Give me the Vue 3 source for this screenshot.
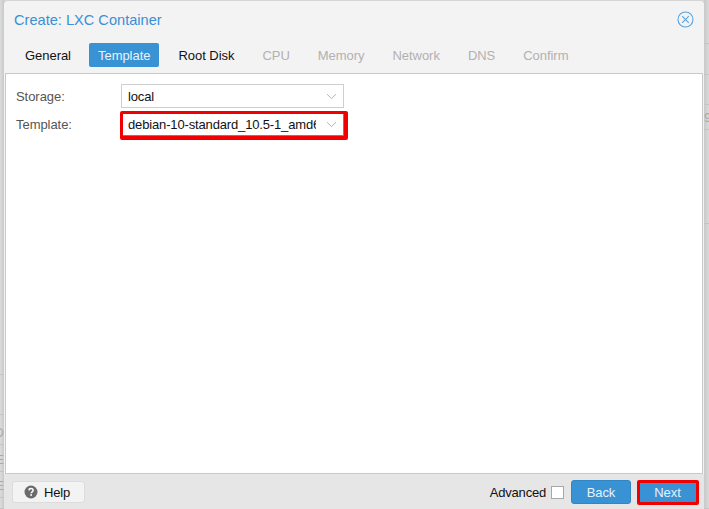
<script setup>
const tabs = [
  { label: 'General' },
  { label: 'Template', active: true },
  { label: 'Root Disk' },
  { label: 'CPU', disabled: true },
  { label: 'Memory', disabled: true },
  { label: 'Network', disabled: true },
  { label: 'DNS', disabled: true },
  { label: 'Confirm', disabled: true },
]
const leftRows = [
  { h: 375, t: '' },
  { h: 40, t: '' },
  { h: 30, t: 'D' },
  { h: 27, t: 'E' },
  { h: 26, t: 'E' },
  { h: 11, t: '' },
]
const rightRows = [
  { h: 44, t: '' },
  { h: 31, t: '' },
  { h: 30, t: '' },
  { h: 25, t: '9' },
  { h: 94, t: '' },
  { h: 285, t: '' },
]
</script>

<template>
  <div class="page">
    <aside class="strip left">
      <div
        v-for="(r, i) in leftRows"
        :key="i"
        class="bg-row"
        :style="{ height: r.h + 'px' }"
      ><span v-if="r.t">{{ r.t }}</span></div>
    </aside>

    <div class="window">
      <header class="head">
        <div class="title-row">
          <span class="title">Create: LXC Container</span>
          <svg class="close" width="17" height="17" viewBox="0 0 17 17" aria-hidden="true">
            <circle cx="8.5" cy="8.5" r="7.5" fill="none" stroke="#5ba3dc" stroke-width="1.1" />
            <path d="M5.2 5.2 11.8 11.8M11.8 5.2 5.2 11.8" stroke="#5ba3dc" stroke-width="1.1" fill="none" />
          </svg>
        </div>
        <nav class="tabs">
          <span
            v-for="t in tabs"
            :key="t.label"
            class="tab"
            :class="{ active: t.active, disabled: t.disabled }"
          >{{ t.label }}</span>
        </nav>
      </header>

      <main class="body">
        <div class="row">
          <label class="label">Storage:</label>
          <div class="select">
            <span class="value">local</span>
            <svg class="chev" width="11" height="7" viewBox="0 0 11 7"><path d="M1 1.2 5.5 5.6 10 1.2" fill="none" stroke="#b4b4b4" stroke-width="1" /></svg>
          </div>
        </div>
        <div class="row">
          <label class="label">Template:</label>
          <div class="select focused">
            <span class="value">debian-10-standard_10.5-1_amd64.tar.gz</span>
            <svg class="chev" width="11" height="7" viewBox="0 0 11 7"><path d="M1 1.2 5.5 5.6 10 1.2" fill="none" stroke="#b4b4b4" stroke-width="1" /></svg>
          </div>
        </div>
      </main>

      <footer class="foot">
        <button class="help" type="button">
          <svg width="14" height="14" viewBox="0 0 14 14" aria-hidden="true">
            <circle cx="7" cy="7" r="6.5" fill="#6b6b6b" />
            <path d="M4.9 5.4C5 4.2 5.9 3.6 7 3.6c1.2 0 2.1.7 2.1 1.8 0 1.5-1.9 1.5-1.9 2.8" fill="none" stroke="#fff" stroke-width="1.5" />
            <rect x="6.3" y="9.2" width="1.7" height="1.6" fill="#fff" />
          </svg>
          <span>Help</span>
        </button>
        <div class="spacer"></div>
        <span class="adv">Advanced</span>
        <span class="check"></span>
        <button class="primary back" type="button">Back</button>
        <button class="primary next" type="button">Next</button>
      </footer>
    </div>

    <aside class="strip right">
      <div
        v-for="(r, i) in rightRows"
        :key="i"
        class="bg-row"
        :style="{ height: r.h + 'px' }"
      ><span v-if="r.t">{{ r.t }}</span></div>
    </aside>
  </div>
</template>

<style>
html, body { margin: 0; padding: 0; overflow: hidden; }
</style>

<style scoped>
.page {
  width: 709px;
  height: 509px;
  display: flex;
  background: #d6d6d6;
  font-family: "Liberation Sans", Arial, sans-serif;
  font-size: 13px;
  overflow: hidden;
}
.strip {
  flex: none;
  height: 509px;
  overflow: hidden;
  color: #a9a9a9;
  font-size: 13px;
}
.strip.left {
  width: 4px;
  background: linear-gradient(to right, #dcdcdc, #c9c9c9);
}
.strip.right {
  width: 5px;
  background: linear-gradient(to right, #c9c9c9, #dadada);
}
.bg-row {
  box-sizing: border-box;
  border-bottom: 1px solid #c4c4c4;
  display: flex;
  align-items: flex-end;
  padding-bottom: 4px;
  line-height: 14px;
  overflow: hidden;
}
.left .bg-row { justify-content: flex-end; }
.window {
  flex: none;
  width: 700px;
  height: 508px;
  margin-top: 1px;
  display: flex;
  flex-direction: column;
  background: #f3f3f3;
  border-radius: 4px 4px 0 0;
}
.head { height: 72px; flex: none; box-sizing: border-box; padding: 0 1px; }
.title-row {
  height: 42px;
  display: flex;
  align-items: center;
  justify-content: space-between;
  padding: 0 9px 4px 9px;
  box-sizing: border-box;
}
.title { color: #3a8fd6; font-size: 14.6px; }
.close { display: block; margin-top: -1px; }
.tabs { display: flex; gap: 10px; padding-left: 11px; letter-spacing: -0.04px; }
.tab {
  height: 24px;
  line-height: 25px;
  padding: 0 9px;
  border-radius: 2px;
  color: #111;
}
.tab.active { background: #3892d4; color: #e8f2fa; margin-left: -1px; }
.tab.disabled { color: #b3b0b0; }
.body {
  flex: 1;
  margin: 0 1px;
  border: 1px solid #c9c9c9;
  background: #fff;
  padding: 10px 10px 0;
}
.row { display: flex; align-items: center; height: 24px; margin-bottom: 4px; }
.label { width: 105px; color: #555; letter-spacing: -0.05px; }
.select {
  width: 223px;
  height: 24px;
  box-sizing: border-box;
  border: 1px solid #cfcfcf;
  background: #fff;
  display: flex;
  align-items: center;
  padding-left: 6px;
  position: relative;
  color: #111;
}
.value { width: 188px; overflow: hidden; white-space: nowrap; letter-spacing: -0.15px; }
.chev { position: absolute; right: 6px; top: 8px; }
.select.focused { border-color: #3892d4; }
.select.focused::after {
  content: "";
  position: absolute;
  left: -2px;
  top: -2px;
  width: 228px;
  height: 29px;
  box-sizing: border-box;
  border: solid #f00000;
  border-width: 3px 4px 4px 3px;
  border-radius: 2px;
}
.foot {
  height: 35px;
  flex: none;
  background: #e6e6e6;
  display: flex;
  align-items: center;
  padding: 1px 7px 0 8px;
  box-sizing: border-box;
}
.help {
  width: 73px;
  height: 22px;
  box-sizing: border-box;
  border: 1px solid #dcdcdc;
  border-radius: 3px;
  background: #f3f3f3;
  display: flex;
  align-items: center;
  gap: 6px;
  padding: 0 0 0 11px;
  font: inherit;
  letter-spacing: -0.2px;
  color: #111;
}
.spacer { flex: 1; }
.adv { color: #111; margin-right: 5px; letter-spacing: -0.2px; }
.check {
  width: 13px;
  height: 13px;
  box-sizing: border-box;
  border: 1px solid #a8a8a8;
  background: #fff;
  margin-right: 7px;
}
.primary {
  width: 60px;
  height: 24px;
  box-sizing: border-box;
  border: 1px solid #3186c6;
  border-radius: 3px;
  background: #3892d4;
  color: #e8f2fa;
  font: inherit;
  padding: 0;
  letter-spacing: -0.1px;
}
.next {
  margin-left: 7px;
  width: 59px;
  position: relative;
}
.next::after {
  content: "";
  position: absolute;
  left: -2px;
  right: -3px;
  top: -1px;
  bottom: -2px;
  border: 3px solid #f00000;
  border-radius: 2px;
}
</style>
